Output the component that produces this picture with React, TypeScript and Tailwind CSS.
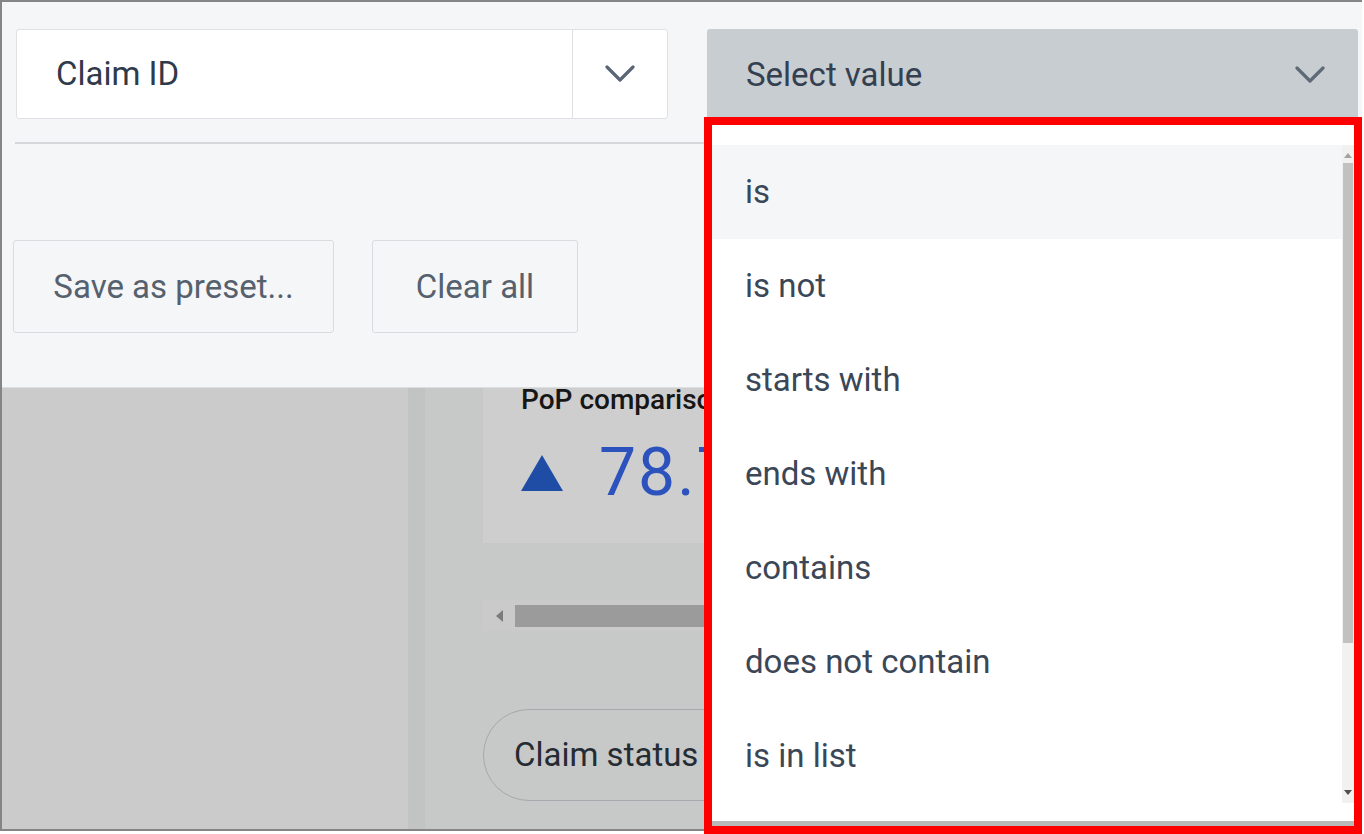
import React from "react";

const OPERATORS = [
  "is",
  "is not",
  "starts with",
  "ends with",
  "contains",
  "does not contain",
  "is in list",
];

function Chevron({ color = "#5b6776" }: { color?: string }) {
  return (
    <svg width="30" height="18" viewBox="0 0 30 18" fill="none">
      <polyline
        points="2,2 15,15 28,2"
        stroke={color}
        strokeWidth="3.2"
        strokeLinecap="round"
        strokeLinejoin="round"
      />
    </svg>
  );
}

function FilterPanel() {
  return (
    <div className="h-[386px] bg-[#f5f6f8] border-b border-[#dcdee1] pt-[27px] overflow-hidden">
      <div className="flex gap-[39px] pl-[14px]">
        {/* field select */}
        <div className="flex w-[652px] h-[90px] bg-white border border-[#dfe1e4] rounded-[3px]">
          <div className="flex-1 flex items-center pl-[39px] text-[33px] text-[#2f3a4a] border-r border-[#dfe1e4]">
            Claim ID
          </div>
          <div className="w-[94px] flex items-center justify-center">
            <Chevron />
          </div>
        </div>
        {/* value select */}
        <div className="flex items-center justify-between w-[651px] h-[91px] bg-[#c8cdd1] rounded-t-[3px] pl-[39px] pr-[33px]">
          <span className="text-[33px] text-[#344050]">Select value</span>
          <Chevron color="#5f6a77" />
        </div>
      </div>

      <div className="ml-[13px] mt-[22px] h-[2px] bg-[#d5d7da]" />

      <div className="flex gap-[38px] pl-[11px] mt-[96px]">
        <button className="w-[321px] h-[93px] bg-[#f5f6f8] border border-[#d9dbde] rounded-[3px] text-[33px] text-[#56616e]">
          Save as preset...
        </button>
        <button className="w-[206px] h-[93px] bg-[#f5f6f8] border border-[#d9dbde] rounded-[3px] text-[33px] text-[#56616e]">
          Clear all
        </button>
      </div>
    </div>
  );
}

function DimmedPage() {
  return (
    <div className="flex h-[441px]">
      <div className="w-[406px] bg-[#cbcbcb]" />
      <div className="w-[17px] bg-[#c2c3c3]" />
      <div className="flex-1 bg-[#c7c8c8] pl-[58px] overflow-hidden">
        <div className="w-[420px] h-[158px] bg-[#cecece] pl-[38px]">
          <div className="text-[28px] font-medium text-[#161616] leading-[30px] -mt-[3px]">
            PoP comparison
          </div>
          <div className="flex items-center gap-[36px] mt-[25px]">
            <div className="w-0 h-0 border-l-[21px] border-r-[21px] border-b-[36px] border-l-transparent border-r-transparent border-b-[#1f4da6]" />
            <span className="text-[66px] leading-[66px] text-[#2c53bd] tracking-[2px]">78.7%</span>
          </div>
        </div>

        <div className="mt-[57px] flex items-center w-[420px] h-[31px] bg-[#cacaca]">
          <div className="w-[32px] flex items-center justify-center">
            <div className="w-0 h-0 border-t-[6px] border-b-[6px] border-r-[7px] border-t-transparent border-b-transparent border-r-[#7c7c7c]" />
          </div>
          <div className="flex-1 h-[22px] bg-[#9b9b9b]" />
        </div>

        <div className="mt-[78px] flex items-center w-[420px] h-[92px] border-[1.5px] border-[#a5a8ad] rounded-full pl-[30px]">
          <span className="text-[33px] text-[#252b33]">Claim status</span>
        </div>
      </div>
    </div>
  );
}

function OperatorMenu() {
  return (
    <div className="absolute left-[704px] top-[117px] w-[658px] h-[717px] border-[8px] border-[#ff0000] bg-white">
      <div className="relative h-full bg-white pt-[20px] border-b-[5px] border-[#b9b9b9]">
        <ul className="pr-[12px]">
          {OPERATORS.map((op, i) => (
            <li
              key={op}
              className={
                i === 0
                  ? "h-[94px] flex items-center pl-[33px] text-[33px] text-[#3b4757] bg-[#f5f6f8]"
                  : "h-[94px] flex items-center pl-[33px] text-[33px] text-[#3b4757]"
              }
            >
              {op}
            </li>
          ))}
        </ul>
        {/* vertical scrollbar */}
        <div className="absolute right-0 top-[20px] w-[12px] h-[658px] bg-[#f1f1f1] flex flex-col items-center">
          <div className="mt-[8px] w-0 h-0 border-l-[4px] border-r-[4px] border-b-[5px] border-l-transparent border-r-transparent border-b-[#a3a3a3]" />
          <div className="mt-[5px] w-[10px] h-[480px] bg-[#c1c1c1]" />
          <div className="flex-1" />
          <div className="mb-[8px] w-0 h-0 border-l-[4px] border-r-[4px] border-t-[5px] border-l-transparent border-r-transparent border-t-[#505050]" />
        </div>
      </div>
    </div>
  );
}

export default function App() {
  return (
    <div
      className="relative w-[1364px] h-[834px] bg-white overflow-hidden"
      style={{ fontFamily: "Roboto, 'Noto Sans', sans-serif" }}
    >
      <div className="w-[1362px] h-[831px] border-l-2 border-t-2 border-b-2 border-[#858585] overflow-hidden">
        <FilterPanel />
        <DimmedPage />
      </div>
      <OperatorMenu />
    </div>
  );
}
